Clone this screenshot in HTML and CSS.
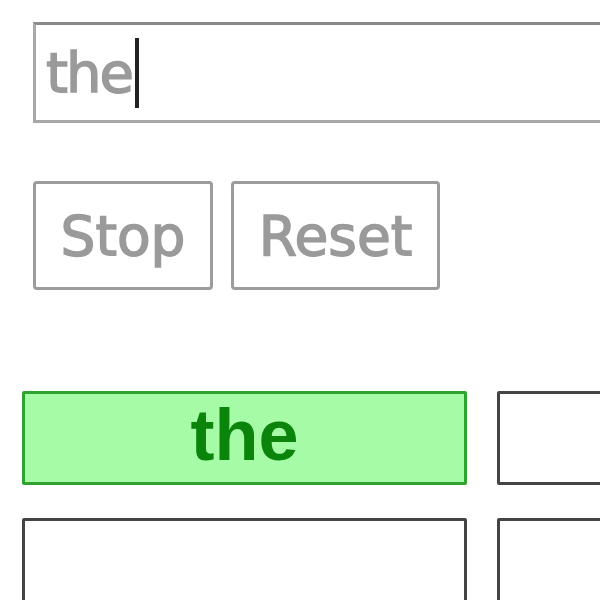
FILE: index.html
```html
<!DOCTYPE html>
<html>
<head>
<meta charset="utf-8">
<link rel="stylesheet" href="styles.css">
</head>
<body>
<div class="page">
  <div class="field"><span class="field-text">the</span><span class="caret"></span></div>
  <div class="buttons">
    <div class="btn btn-stop">Stop</div>
    <div class="btn btn-reset">Reset</div>
  </div>
  <div class="grid">
    <div class="cell cell-hit">the</div>
    <div class="cell"></div>
    <div class="cell"></div>
    <div class="cell"></div>
  </div>
</div>
</body>
</html>
```
FILE: styles.css
```css
html, body {
  margin: 0;
  padding: 0;
  width: 600px;
  height: 600px;
  overflow: hidden;
  background: #fff;
}
.page {
  padding-top: 22px;
  display: flex;
  flex-direction: column;
  filter: blur(0.7px);
}
.field {
  margin-left: 33px;
  width: 700px;
  height: 95px;
  border: 3px solid #a8a8a8;
  border-top-color: #8a8a8a;
  display: flex;
  align-items: center;
  padding-left: 10px;
  box-sizing: content-box;
  font-family: "DejaVu Sans", sans-serif;
  font-size: 56px;
  color: #9a9a9a;
}
.field-text {
  line-height: 1;
  letter-spacing: -2px;
  -webkit-text-stroke: 1.5px #9a9a9a;
}
.caret {
  width: 4px;
  height: 70px;
  background: #222;
  margin-left: 3px;
}
.buttons {
  margin-top: 58px;
  margin-left: 33px;
  display: flex;
  gap: 18px;
}
.btn {
  height: 103px;
  border: 3px solid #9c9c9c;
  border-radius: 4px;
  display: flex;
  align-items: center;
  justify-content: center;
  font-family: "DejaVu Sans", sans-serif;
  font-size: 55px;
  color: #9a9a9a;
  -webkit-text-stroke: 1.5px #9a9a9a;
}
.btn-stop { width: 174px; }
.btn-reset { width: 203px; }
.grid {
  margin-top: 101px;
  margin-left: 22px;
  display: grid;
  grid-template-columns: 445px 445px;
  grid-auto-rows: 94px;
  column-gap: 30px;
  row-gap: 33px;
}
.cell {
  box-sizing: border-box;
  border: 3px solid #444;
  border-radius: 2px;
  background: #fff;
}
.cell-hit {
  background: #a6fca6;
  border-color: #2ea42e;
  color: #0a840a;
  font-family: "Liberation Sans", Arial, sans-serif;
  font-weight: bold;
  font-size: 72px;
  display: flex;
  align-items: center;
  justify-content: center;
  line-height: 1;
  padding-bottom: 6px;
}
```
